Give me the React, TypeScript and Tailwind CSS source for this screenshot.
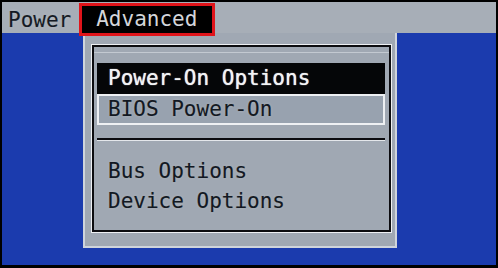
import React from "react";

const mono = { fontFamily: '"DejaVu Sans Mono", "Liberation Mono", monospace' };

const App = () => {
  return (
    <div
      className="w-[498px] h-[268px] bg-black pt-[2px] pl-[2px] pr-[2px] pb-[3px] text-[21px] leading-none"
      style={mono}
    >
      <div className="h-full flex flex-col bg-[#1b3bae]">
        {/* menu bar */}
        <div className="h-[31px] shrink-0 flex items-start bg-[#a7aeb7]">
          <span className="mt-[8px] ml-[6px] text-[#141a24] [text-shadow:0_0_2px_#e6eaef,0_0_1px_#141a24]">
            Power
          </span>
          <div className="relative z-10 ml-[8px] mt-[1px] w-[136px] h-[33px] border-[3px] border-[#e0141a] bg-black flex items-center pl-[14px]">
            <span className="text-[#d4d6da]">Advanced</span>
          </div>
        </div>
        {/* body */}
        <div className="flex flex-1">
          <div className="w-[81px] shrink-0" />
          <div className="w-[314px] h-[215px] bg-[#a0a8b3] border-2 border-[#cfd4db] border-t-0 pt-[12px] pl-[7px] pr-[4px]">
            <div className="h-[187px] border-2 border-[#0c0c10] ring-1 ring-[#eef0f3] pt-[5px] pl-[3px] pr-[4px] flex flex-col">
              <div className="h-px bg-[#c3c9d1] -ml-[3px] -mr-[4px]" />
              <div className="h-[10px]" />
              {/* selected */}
              <div className="h-[31px] bg-[#050608] flex items-center pl-[11px] text-[#f2f3f5] [text-shadow:0_0_1px_#f2f3f5]">
                Power-On Options
              </div>
              <div className="h-[31px] border-2 border-[#eef0f3] bg-[#98a2af] flex items-center pl-[9px] text-[#121822] [text-shadow:0_0_2px_#e2e6eb,0_0_1px_#121822]">
                BIOS Power-On
              </div>
              <div className="h-[13px]" />
              <div className="h-[2px] bg-[#0c0c10]" />
              <div className="h-px bg-[#e4e7eb]" />
              <div className="h-[15px]" />
              <div className="h-[30px] flex items-center pl-[11px] text-[#121822] [text-shadow:0_0_2px_#e2e6eb,0_0_1px_#121822]">
                Bus Options
              </div>
              <div className="h-[30px] flex items-center pl-[11px] text-[#121822] [text-shadow:0_0_2px_#e2e6eb,0_0_1px_#121822]">
                Device Options
              </div>
            </div>
          </div>
        </div>
      </div>
    </div>
  );
};

export default App;
